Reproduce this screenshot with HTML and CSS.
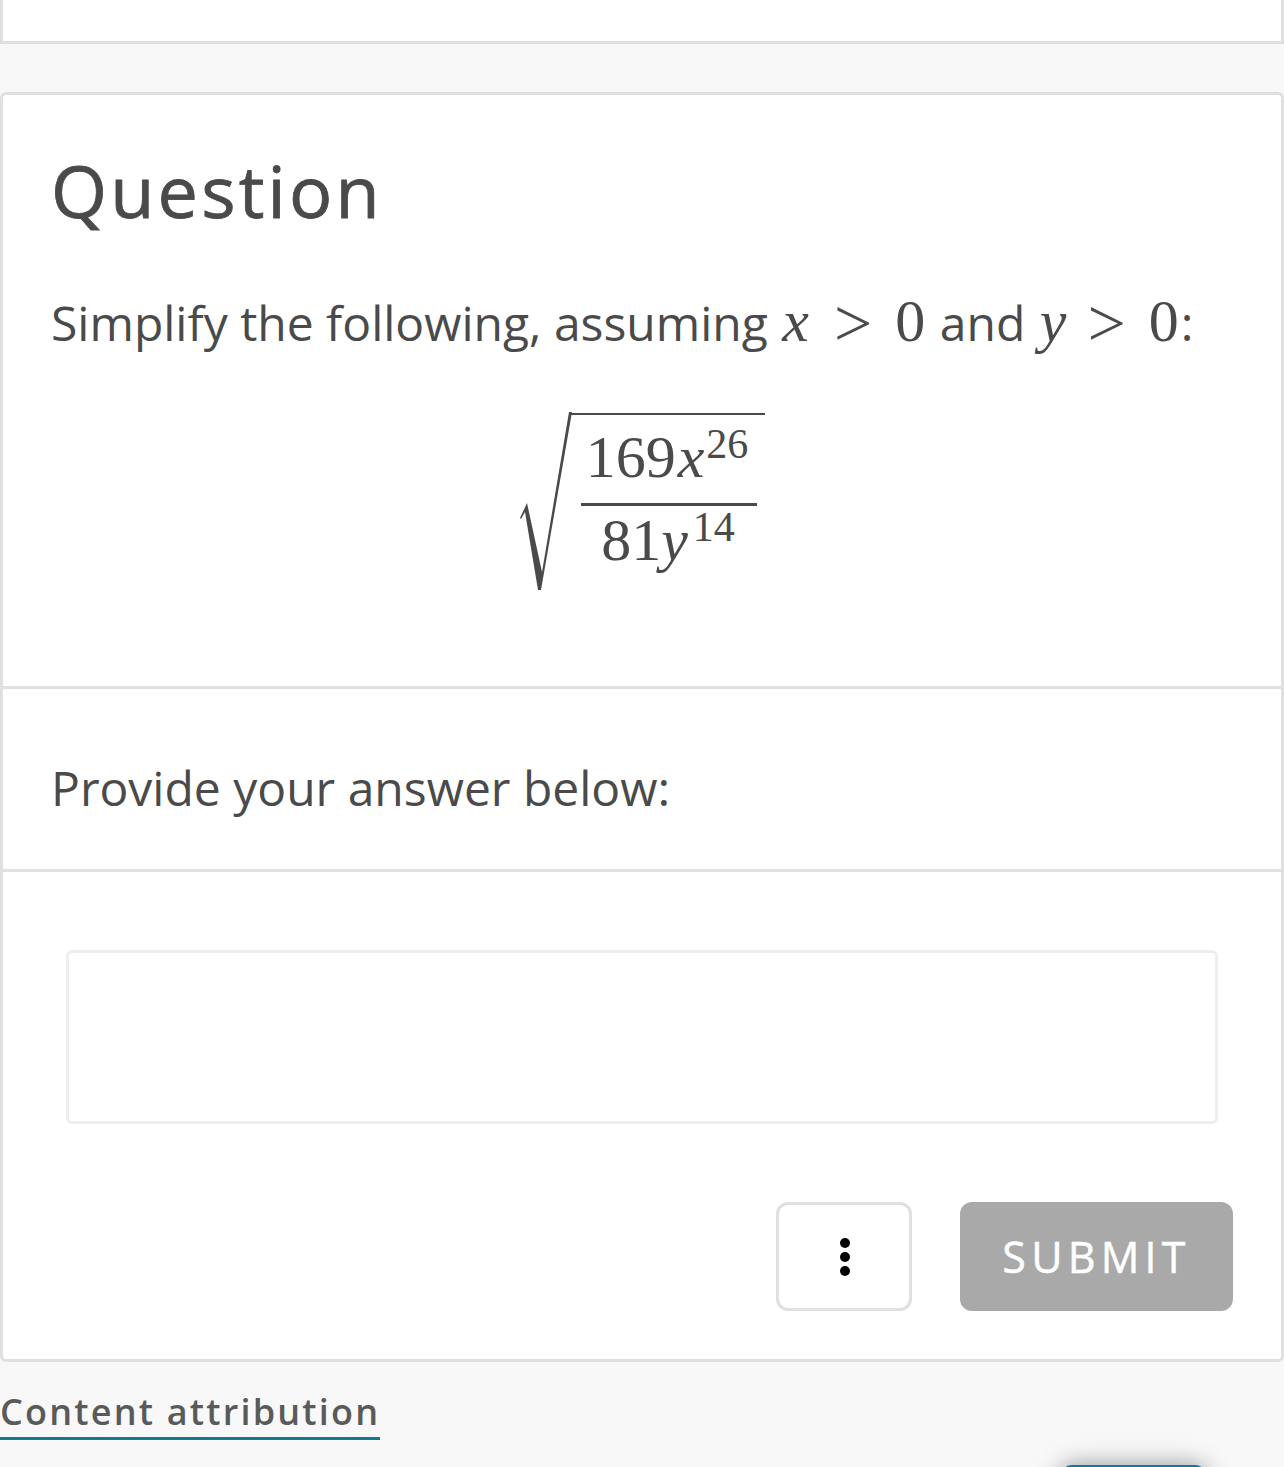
FILE: index.html
```html
<!DOCTYPE html>
<html lang="en">
<head>
  <meta charset="UTF-8">
  <meta name="viewport" content="width=device-width, initial-scale=1.0">
  <title>Question</title>
  <link rel="stylesheet" href="styles.css">
</head>
<body>

  <div class="prev-card"></div>

  <div class="card">
    <div class="section question">
      <h1>Question</h1>
      <p class="prompt">Simplify the following, assuming <span class="math"><i>x</i><span class="rel">&gt;</span>0</span> and <span class="math"><i class="var-y">y</i><span class="rel">&gt;</span>0</span>:</p>

      <div class="formula">
        <svg class="radical" width="52" height="180" viewBox="0 0 52 180" aria-hidden="true">
          <path d="M0 106 L7 91 L22 160 L49 0 L52 0 L21 178 L18 178 L5 100 L1 107 Z" fill="#4a4a4a"/>
        </svg>
        <div class="radicand">
          <div class="num">169<i>x</i><sup>26</sup></div>
          <div class="den">81<i>y</i><sup class="wide">14</sup></div>
        </div>
      </div>
    </div>

    <div class="section answer-label">
      <p>Provide your answer below:</p>
    </div>

    <div class="section answer">
      <input class="answer-input" type="text">
      <div class="actions">
        <button class="more-btn" type="button">
          <span class="dot"></span>
          <span class="dot"></span>
          <span class="dot"></span>
        </button>
        <button class="submit-btn" type="button">SUBMIT</button>
      </div>
    </div>
  </div>

  <a class="attribution" href="#">Content attribution</a>

  <div class="floating-btn"></div>

</body>
</html>
```

FILE: styles.css
```css
* {
  box-sizing: border-box;
}

body {
  font-family: "Open Sans", sans-serif;
  background-color: #f8f8f8;
  color: #4a4a4a;
  margin: 0;
  height: 1467px;
  overflow: hidden;
  position: relative;
}

.prev-card {
  height: 44px;
  background-color: #fff;
  border: 3px solid #e0e0e0;
  border-top: none;
}

.card {
  margin-top: 48px;
  height: 1270px;
  background-color: #fff;
  border: 3px solid #e0e0e0;
  border-radius: 6px;
  display: flex;
  flex-direction: column;
}

.section {
  border-bottom: 3px solid #e0e0e0;
}

.question {
  height: 594px;
  padding: 53px 48px 0;
}

h1 {
  font-size: 72px;
  font-weight: 400;
  line-height: 84px;
  letter-spacing: 3.2px;
  -webkit-text-stroke: 0.8px #4a4a4a;
  margin: 0;
}

.prompt {
  height: 64px;
  font-size: 48px;
  line-height: 64px;
  margin: 57px 0 0;
  white-space: nowrap;
}

.math {
  font-family: "Liberation Serif", serif;
  font-size: 60px;
  line-height: 64px;
  margin: 0 2px;
}

.math i {
  margin-right: 1px;
}

.math i.var-y {
  margin-right: -3px;
}

.rel {
  margin: 0 23px 0 24px;
  font-size: 68px;
  line-height: 64px;
  vertical-align: -5px;
}

.formula {
  display: flex;
  align-items: flex-start;
  justify-content: center;
  font-family: "Liberation Serif", serif;
  font-size: 60px;
  margin: 59px 0 0 1px;
}

.radical {
  display: block;
}

.radicand {
  border-top: 2px solid #4a4a4a;
  margin-left: -2px;
  padding: 0 8px 0 11px;
  width: 195px;
  margin-top: 1px;
}

.num,
.den {
  line-height: 64px;
  text-align: center;
  white-space: nowrap;
}

.num {
  height: 91px;
  padding: 10px 4px 0 0;
  border-bottom: 3px solid #4a4a4a;
}

.num i {
  padding: 0 2px;
}

.den {
  padding: 2px 2px 0 0;
}

sup {
  font-size: 42px;
  line-height: 0;
  vertical-align: 19px;
}

sup.wide {
  margin-left: 5px;
}

.answer-label {
  height: 183px;
  padding: 0 48px;
}

.answer-label p {
  font-size: 48px;
  line-height: 64px;
  margin: 67px 0 0;
}

.answer {
  flex: 1;
  border-bottom: none;
  padding: 78px 48px 0 63px;
}

.answer-input {
  display: block;
  width: 1152px;
  height: 174px;
  background-color: #fff;
  border: 3px solid #eee;
  border-radius: 6px;
}

.actions {
  display: flex;
  justify-content: flex-end;
  gap: 48px;
  margin-top: 78px;
}

.more-btn {
  width: 136px;
  height: 109px;
  background-color: #fff;
  border: 3px solid #e0e0e0;
  border-radius: 12px;
  padding: 0 0 0 2px;
  display: flex;
  flex-direction: column;
  align-items: center;
  justify-content: center;
  gap: 4px;
}

.dot {
  width: 10px;
  height: 10px;
  border-radius: 50%;
  background-color: #000;
}

.submit-btn {
  width: 273px;
  height: 109px;
  background-color: #a9a9a9;
  color: #fff;
  border: none;
  border-radius: 12px;
  font-family: "Open Sans", sans-serif;
  font-size: 43px;
  font-weight: 400;
  letter-spacing: 5.2px;
  -webkit-text-stroke: 0.5px #fff;
  padding: 0;
}

.attribution {
  display: block;
  width: 380px;
  margin-top: 28px;
  padding-bottom: 3px;
  font-size: 36px;
  font-weight: 600;
  line-height: 44px;
  letter-spacing: 2.2px;
  color: #5a5a5a;
  text-decoration: none;
  white-space: nowrap;
  border-bottom: 3px solid #117a8b;
}

.floating-btn {
  position: absolute;
  left: 1060px;
  top: 1465px;
  width: 147px;
  height: 60px;
  background-color: #1178a0;
  border-radius: 12px;
  box-shadow: 0 0 24px rgba(0, 0, 0, 0.4);
}
```
